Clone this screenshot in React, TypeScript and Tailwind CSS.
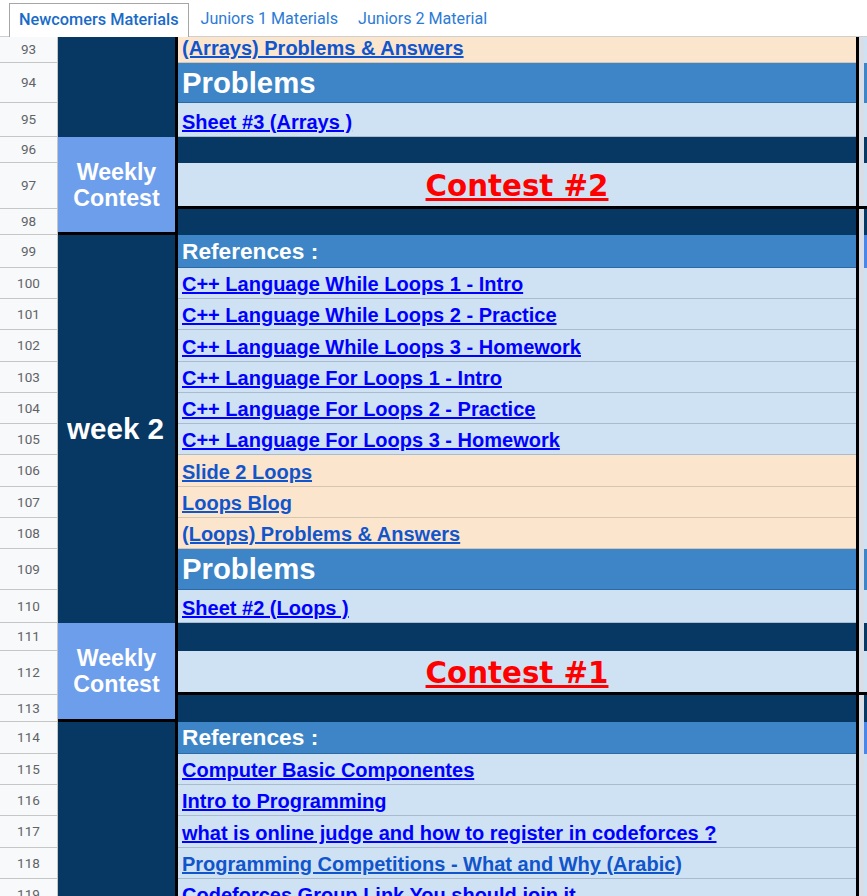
import React from 'react';

type Kind = 'peach' | 'light' | 'problems' | 'refs' | 'navy' | 'contest';

interface SheetRow {
  n: number;
  h: number;
  kind: Kind;
  text?: string;
  dark?: boolean;
  next: string;
}

const LIGHT = 'bg-[#cfe2f3]';
const NAVY = 'bg-[#073763]';
const BLUE1 = 'bg-[#3d85c6]';
const BLUE2 = 'bg-[#4a86e8]';

const rows: SheetRow[] = [
  { n: 93, h: 26, kind: 'peach', text: '(Arrays) Problems & Answers', next: LIGHT },
  { n: 94, h: 40, kind: 'problems', text: 'Problems', next: BLUE1 },
  { n: 95, h: 34, kind: 'light', text: 'Sheet #3 (Arrays )', next: LIGHT },
  { n: 96, h: 26, kind: 'navy', next: NAVY },
  { n: 97, h: 46, kind: 'contest', text: 'Contest #2', next: LIGHT },
  { n: 98, h: 26, kind: 'navy', next: NAVY },
  { n: 99, h: 33, kind: 'refs', text: 'References :', next: BLUE2 },
  { n: 100, h: 31, kind: 'light', text: 'C++ Language While Loops 1 - Intro', next: LIGHT },
  { n: 101, h: 31, kind: 'light', text: 'C++ Language While Loops 2 - Practice', next: LIGHT },
  { n: 102, h: 32, kind: 'light', text: 'C++ Language While Loops 3 - Homework', next: LIGHT },
  { n: 103, h: 31, kind: 'light', text: 'C++ Language For Loops 1 - Intro', next: LIGHT },
  { n: 104, h: 31, kind: 'light', text: 'C++ Language For Loops 2 - Practice', next: LIGHT },
  { n: 105, h: 31, kind: 'light', text: 'C++ Language For Loops 3 - Homework', next: LIGHT },
  { n: 106, h: 32, kind: 'peach', text: 'Slide 2 Loops', next: LIGHT },
  { n: 107, h: 31, kind: 'peach', text: 'Loops Blog', next: LIGHT },
  { n: 108, h: 31, kind: 'peach', text: '(Loops) Problems & Answers', next: LIGHT },
  { n: 109, h: 41, kind: 'problems', text: 'Problems', next: BLUE1 },
  { n: 110, h: 33, kind: 'light', text: 'Sheet #2 (Loops )', next: LIGHT },
  { n: 111, h: 28, kind: 'navy', next: NAVY },
  { n: 112, h: 44, kind: 'contest', text: 'Contest #1', next: LIGHT },
  { n: 113, h: 27, kind: 'navy', next: NAVY },
  { n: 114, h: 32, kind: 'refs', text: 'References :', next: BLUE2 },
  { n: 115, h: 31, kind: 'light', text: 'Computer Basic Componentes', next: LIGHT },
  { n: 116, h: 31, kind: 'light', text: 'Intro to Programming', next: LIGHT },
  { n: 117, h: 32, kind: 'light', text: 'what is online judge and how to register in codeforces ?', next: LIGHT },
  { n: 118, h: 31, kind: 'light', text: 'Programming Competitions - What and Why (Arabic)', dark: true, next: LIGHT },
  { n: 119, h: 31, kind: 'light', text: 'Codeforces Group Link You should join it', next: LIGHT },
];

const arial = { fontFamily: '"Liberation Sans", Arial, sans-serif' };

const Cell: React.FC<{ row: SheetRow }> = ({ row }) => {
  switch (row.kind) {
    case 'peach':
      return (
        <div className="flex-1 flex items-end pl-1 pb-[2px] bg-[#fce5cd] border-b border-[#d5c5b3]">
          <span className="text-[20px] leading-[23px] font-bold underline decoration-2 text-[#1155cc] whitespace-nowrap">{row.text}</span>
        </div>
      );
    case 'light':
      return (
        <div className="flex-1 flex items-end pl-1 pb-[2px] bg-[#cfe2f3] border-b border-[#a9bbcd] overflow-hidden">
          <span
            className={`text-[20px] leading-[23px] font-bold underline decoration-2 whitespace-nowrap ${row.dark ? 'text-[#1155cc]' : 'text-[#0000ff]'}`}
          >
            {row.text}
          </span>
        </div>
      );
    case 'problems':
      return (
        <div className="flex-1 flex items-center pl-1 bg-[#3d85c6] border-b border-[#2d6aa5]">
          <span className="text-[29.3px] leading-none font-bold text-white">{row.text}</span>
        </div>
      );
    case 'refs':
      return (
        <div className="flex-1 flex items-center pl-1 bg-[#3d85c6] border-b border-[#2d6aa5]">
          <span className="text-[22.7px] leading-none font-bold text-white">{row.text}</span>
        </div>
      );
    case 'contest':
      return (
        <div className="flex-1 flex items-center justify-center pt-[4px] bg-[#cfe2f3]">
          <span
            className="text-[29.3px] leading-none font-bold underline decoration-[3px] text-[#ff0000]"
            style={{ fontFamily: '"DejaVu Sans", Verdana, sans-serif' }}
          >
            {row.text}
          </span>
        </div>
      );
    default:
      return <div className="flex-1 bg-[#073763]" />;
  }
};

const WeeklyContest: React.FC<{ h: number }> = ({ h }) => (
  <div
    className="flex flex-col items-center justify-center bg-[#6d9eeb] border-b-[3px] border-black text-white font-bold text-[23.2px] leading-[26px]"
    style={{ height: h }}
  >
    <span>Weekly</span>
    <span>Contest</span>
  </div>
);

export default function App() {
  return (
    <div className="w-[867px] h-[896px] overflow-hidden bg-white flex flex-col" style={arial}>
      {/* sheet tabs */}
      <div
        className="h-[37px] shrink-0 flex items-end pl-[9px] border-b border-[#cfcfcf]"
        style={{ fontFamily: 'Roboto, "Noto Sans", sans-serif' }}
      >
        <div className="h-[34px] -mb-px px-[9px] flex items-center bg-white border border-b-0 border-[#a6a6a6] font-medium text-[16.3px] text-[#1a6bc8]">
          Newcomers Materials
        </div>
        <div className="h-[34px] pl-[12px] pr-[10px] flex items-center text-[16.1px] text-[#2b7bd6]">Juniors 1 Materials</div>
        <div className="h-[34px] px-[10px] flex items-center text-[16.1px] text-[#2b7bd6]">Juniors 2 Material</div>
      </div>

      <div className="flex flex-1 min-h-0">
        {/* row numbers */}
        <div
          className="w-[58px] shrink-0 bg-[#f8f9fa] border-r border-[#c4c7c5] text-[13.5px] text-[#5f6368]"
          style={{ fontFamily: 'Roboto, "Noto Sans", sans-serif' }}
        >
          {rows.map((r) => (
            <div key={r.n} className="flex items-center justify-center border-b border-[#c4c7c5]" style={{ height: r.h }}>
              {r.n}
            </div>
          ))}
        </div>

        {/* week column */}
        <div className="w-[117px] shrink-0 flex flex-col">
          <div className="h-[100px] bg-[#073763]" />
          <WeeklyContest h={98} />
          <div className="h-[388px] bg-[#073763] flex items-center justify-center pr-[2px] text-white font-bold text-[29.6px]">
            week 2
          </div>
          <WeeklyContest h={99} />
          <div className="flex-1 bg-[#073763]" />
        </div>

        {/* content column */}
        <div className="flex-1 border-l-[3px] border-black">
          {rows.map((r) => (
            <div
              key={r.n}
              className={`flex ${r.kind === 'contest' ? 'border-b-[3px] border-black' : ''}`}
              style={{ height: r.h }}
            >
              <Cell row={r} />
              <div className="w-[3px] bg-black" />
              <div className="w-[5px] bg-[#d9dde6]" />
              <div className={`w-[3px] ${r.next}`} />
            </div>
          ))}
        </div>
      </div>
    </div>
  );
}
